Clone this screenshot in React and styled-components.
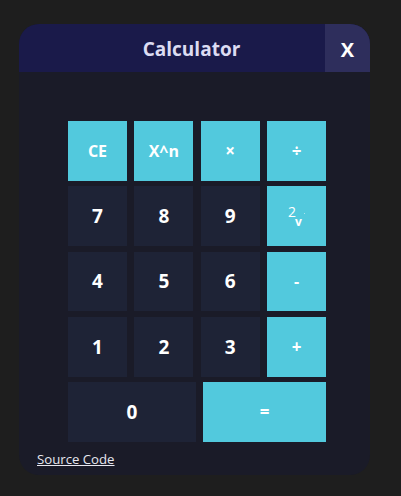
import React from "react";
import styled, { createGlobalStyle } from "styled-components";

const Global = createGlobalStyle`
  html, body {
    margin: 0;
    padding: 0;
    background: #1e1e1e;
    font-family: "Open Sans", "Noto Sans", sans-serif;
  }
  body {
    padding: 24px 0 0 19px;
  }
`;

const Window = styled.div`
  width: 351px;
  height: 451px;
  background: #1a1b28;
  border-radius: 20px;
  overflow: hidden;
  display: flex;
  flex-direction: column;
`;

const Header = styled.div`
  height: 48px;
  display: flex;
  align-items: stretch;
  background: #1a1a4a;
`;

const Title = styled.div`
  flex: 1;
  display: flex;
  align-items: center;
  justify-content: center;
  padding: 2px 0 0 39px;
  color: #dcdcf2;
  font-size: 19px;
  font-weight: 700;
`;

const CloseButton = styled.button`
  width: 45px;
  border: none;
  margin: 0;
  padding: 2px 0 0;
  background: #2e2e5c;
  color: #ffffff;
  font-family: inherit;
  font-size: 20px;
  font-weight: 700;
  cursor: pointer;
`;

const Body = styled.div`
  flex: 1;
  display: flex;
  flex-direction: column;
  padding: 49px 0 0 49px;
`;

const Keypad = styled.div`
  display: flex;
  flex-direction: column;
  gap: 5.6px;
  width: 258px;
`;

const Row = styled.div`
  display: grid;
  grid-template-columns: ${(p) => p.$cols || "repeat(4, 1fr)"};
  column-gap: ${(p) => p.$gap || "7.33px"};
  height: 59.7px;
`;

const Key = styled.button`
  border: none;
  margin: 0;
  padding: 0;
  display: flex;
  align-items: center;
  justify-content: center;
  font-family: inherit;
  color: #ffffff;
  cursor: pointer;
  background: ${(p) => (p.$accent ? "#52c9dd" : "#1e2336")};
  font-size: ${(p) => (p.$op ? "17px" : p.$accent ? "16px" : "19px")};
  font-weight: 700;
`;

const Root = styled.span`
  display: inline-flex;
  align-items: flex-start;
  position: relative;
  margin-left: -3px;
  height: 22px;
`;

const RootIndex = styled.span`
  font-size: 14px;
  font-weight: 400;
  line-height: 14px;
`;

const RootSign = styled.span`
  font-size: 12px;
  font-weight: 700;
  line-height: 12px;
  margin-top: 11px;
  margin-left: -1px;
`;

const RootTick = styled.span`
  position: absolute;
  right: -3px;
  top: 8px;
  width: 1px;
  height: 1px;
  background: rgba(255, 255, 255, 0.5);
`;

const Footer = styled.div`
  padding: 5px 0 0 18px;
  margin-left: -49px;
`;

const SourceLink = styled.a`
  color: #e8e8f0;
  font-size: 13.2px;
  text-decoration: underline;
`;

const rows = [
  [
    { label: "CE", accent: true },
    { label: "X^n", accent: true },
    { label: "×", accent: true, op: true },
    { label: "÷", accent: true, op: true },
  ],
  [
    { label: "7" },
    { label: "8" },
    { label: "9" },
    { label: "root", accent: true },
  ],
  [
    { label: "4" },
    { label: "5" },
    { label: "6" },
    { label: "-", accent: true },
  ],
  [
    { label: "1" },
    { label: "2" },
    { label: "3" },
    { label: "+", accent: true, op: true },
  ],
];

export default function App() {
  return (
    <>
      <Global />
      <Window>
        <Header>
          <Title>Calculator</Title>
          <CloseButton>X</CloseButton>
        </Header>
        <Body>
          <Keypad>
            {rows.map((row, i) => (
              <Row key={i}>
                {row.map((k) => (
                  <Key key={k.label} $accent={k.accent} $op={k.op}>
                    {k.label === "root" ? (
                      <Root>
                        <RootIndex>2</RootIndex>
                        <RootSign>v</RootSign>
                        <RootTick />
                      </Root>
                    ) : (
                      k.label
                    )}
                  </Key>
                ))}
              </Row>
            ))}
            <Row $cols="128px 123px" $gap="7px">
              <Key>0</Key>
              <Key $accent $op>=</Key>
            </Row>
          </Keypad>
          <Footer>
            <SourceLink href="#">Source Code</SourceLink>
          </Footer>
        </Body>
      </Window>
    </>
  );
}
